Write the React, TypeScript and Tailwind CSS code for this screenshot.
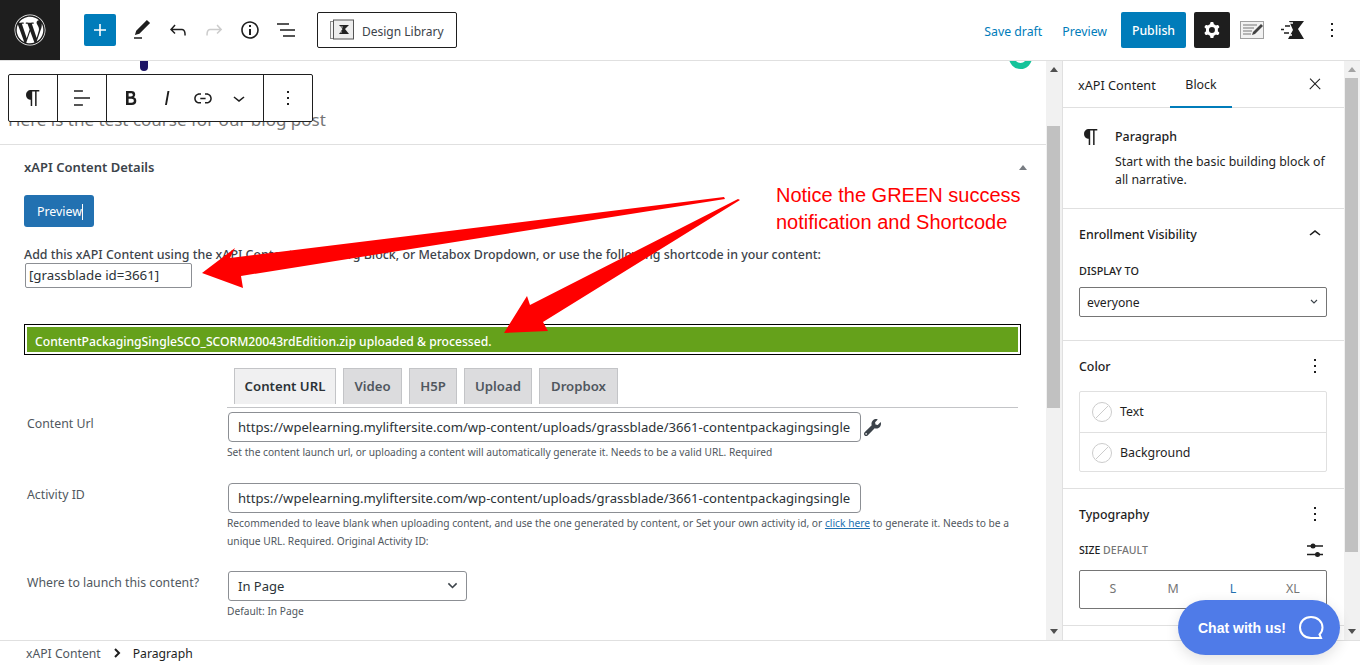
import React from "react";
import { FaWordpress, FaWrench } from "react-icons/fa";

const Wp = ({ d, size = 24, className = "" }: { d: string; size?: number; className?: string }) => (
  <svg width={size} height={size} viewBox="0 0 24 24" fill="currentColor" fillRule="evenodd" className={className}>
    <path d={d} />
  </svg>
);

const I = {
  plus: "M18 11.2h-5.2V6h-1.6v5.2H6v1.6h5.2V18h1.6v-5.2H18z",
  pen: "M20.1 5.1L16.9 2 6.2 12.7l-1.3 4.4 4.5-1.3L20.1 5.1zM4 20.8h8v-1.5H4v1.5z",
  undo: "M18.3 11.7c-.6-.6-1.4-.9-2.3-.9H6.7l2.9-3.3-1.1-1-4.5 5L8.5 16l1-1-2.7-2.7H16c.5 0 .9.2 1.3.5 1 1 1 3.4 1 4.5v.3h1.5v-.2c0-1.5 0-4.3-1.5-5.7z",
  redo: "M15.6 6.5l-1.1 1 2.9 3.3H8c-.9 0-1.7.3-2.3.9-1.4 1.5-1.4 4.2-1.4 5.6v.2h1.5v-.3c0-1.1 0-3.5 1-4.5.3-.3.7-.5 1.3-.5h9.2L14.5 15l1.1 1.1 4.6-4.6-4.6-5z",
  info: "M12 3.2c-4.8 0-8.8 3.9-8.8 8.8 0 4.8 3.9 8.8 8.8 8.8 4.8 0 8.8-3.9 8.8-8.8 0-4.8-4-8.8-8.8-8.8zm0 16c-4 0-7.2-3.3-7.2-7.2C4.8 8 8 4.8 12 4.8s7.2 3.3 7.2 7.2c0 4-3.2 7.2-7.2 7.2zM11 17h2v-6h-2v6zm0-8h2V7h-2v2z",
  list: "M3 5.2h12v1.5H3zM6 11.200h15v1.500H6zM9 17.200h12v1.500H9z",
  cog: "M10.289 4.836A1 1 0 0111.275 4h1.306a1 1 0 01.987.836l.244 1.466c.787.26 1.503.679 2.108 1.218l1.393-.522a1 1 0 011.216.437l.653 1.13a1 1 0 01-.23 1.273l-1.148.944a6.025 6.025 0 010 2.435l1.149.946a1 1 0 01.23 1.272l-.653 1.13a1 1 0 01-1.216.437l-1.394-.522c-.605.54-1.32.958-2.108 1.218l-.244 1.466a1 1 0 01-.987.836h-1.306a1 1 0 01-.986-.836l-.244-1.466a5.995 5.995 0 01-2.108-1.218l-1.394.522a1 1 0 01-1.217-.436l-.653-1.131a1 1 0 01.23-1.272l1.149-.946a6.026 6.026 0 010-2.435l-1.148-.944a1 1 0 01-.23-1.272l.653-1.131a1 1 0 011.217-.437l1.393.522a5.994 5.994 0 012.108-1.218l.244-1.466zM14.929 12a3 3 0 11-6 0 3 3 0 016 0z",
  more: "M13 19h-2v-2h2v2zm0-6h-2v-2h2v2zm0-6h-2V5h2v2z",
  para: "M18.3 4H9.9v-.1l-.9.2c-2.3.4-4 2.4-4 4.8s1.7 4.4 4 4.8l.7.1V20h1.5V5.5h2.9V20h1.5V5.5h2.7V4z",
  align: "M4 19.8h8.9v-1.5H4v1.5zm8.9-15.6H4v1.5h8.9V4.2zm-8.9 7v1.5h16v-1.5H4z",
  bold: "M14.7 11.3c1-.6 1.5-1.6 1.5-3 0-2.3-1.3-3.4-4-3.4H7v14h5.8c1.4 0 2.5-.3 3.3-1 .8-.7 1.2-1.7 1.2-2.9.1-1.9-.8-3.1-2.6-3.7zm-5.1-4h2.3c.6 0 1.1.1 1.4.4.3.3.5.7.5 1.2s-.2 1-.5 1.2c-.3.3-.8.4-1.4.4H9.6V7.3zm4.6 9c-.4.3-1 .4-1.7.4H9.6v-3.9h2.9c.7 0 1.3.2 1.7.5.4.3.6.8.6 1.5s-.2 1.2-.6 1.5z",
  italic: "M12.5 5L10 19h1.9l2.5-14z",
  link: "M15.6 7.2H14v1.5h1.6c2 0 3.7 1.7 3.7 3.7s-1.7 3.7-3.7 3.7H14v1.5h1.6c2.8 0 5.2-2.3 5.2-5.2 0-2.9-2.3-5.2-5.2-5.2zM4.7 12.4c0-2 1.7-3.7 3.7-3.7H10V7.2H8.4c-2.9 0-5.2 2.3-5.2 5.2 0 2.9 2.3 5.2 5.2 5.2H10v-1.5H8.4c-2 0-3.7-1.7-3.7-3.7zm4.6.9h5.3v-1.5H9.3v1.5z",
  down: "M17.5 11.6L12 16l-5.5-4.4.9-1.2L12 14l4.5-3.6 1 1.2z",
  up: "M6.5 12.4L12 8l5.5 4.4-.9 1.2L12 10l-4.5 3.6-1-1.2z",
  close: "M13 11.8l6.1-6.3-1-1-6.1 6.2-6.1-6.3-1 1 6.1 6.3-6.5 6.7 1 1 6.5-6.6 6.5 6.6 1-1z",
};

const Chevron = ({ width = 11 }: { width?: number }) => (
  <svg width={width} height={(width * 2) / 3} viewBox="0 0 12 8" fill="none" stroke="#3c434a" strokeWidth="1.700" className="shrink-0">
    <path d="M1.5 1.5 6 6l4.5-4.5" />
  </svg>
);

const KLogo = () => (
  <svg width="24" height="22" viewBox="0 0 24 22">
    <rect x="0.5" y="2.5" width="19" height="17" fill="#f4f4f4" stroke="#8a8a8a" />
    <rect x="3.5" y="1" width="20" height="19" fill="#eeeeee" stroke="#555" />
    <path d="M9 6h10l-4 4 4 5H9l3.500-5z" fill="#222" />
    <path d="M7 8h6M6 10.500h6M7 13h5" stroke="#eee" strokeWidth="0.8" />
  </svg>
);

const Scrollbar = ({ top, height, dimTop }: { top: number; height: number; dimTop?: boolean }) => (
  <div className="w-4 shrink-0 bg-[#f1f1f1] flex flex-col items-center relative">
    <div className={`mt-[6px] w-0 h-0 border-x-[4px] border-x-transparent border-b-[5px] ${dimTop ? "border-b-[#a3a3a3]" : "border-b-[#505050]"}`} />
    <div className="absolute left-[1px] w-[13px] bg-[#c1c1c1]" style={{ top, height }} />
    <div className="mt-auto mb-[6px] w-0 h-0 border-x-[4px] border-x-transparent border-t-[5px] border-t-[#505050]" />
  </div>
);

const Tab = ({ label, active, w }: { label: string; active?: boolean; w: string }) => (
  <div
    className={`${w} h-[36px] flex items-center justify-center text-[13.2px] font-semibold border border-b-0 border-[#c3c4c7] ${
      active ? "bg-[#f0f0f1] text-[#2c3338]" : "bg-[#dcdcde] text-[#50575e]"
    }`}
  >
    {label}
  </div>
);

const TextBox = ({ value }: { value: string }) => (
  <div className="w-[633px] h-[30px] shrink-0 rounded-[4px] border border-[#8c8f94] bg-white pl-[9px] pr-[4px] pt-[2px] flex items-center text-[13.100px] text-[#2c3338] whitespace-nowrap overflow-hidden">
    {value}
  </div>
);

const Panel = ({ children, className = "" }: { children: React.ReactNode; className?: string }) => (
  <section className={`border-b border-[#e0e0e0] pl-4 pr-[17px] ${className}`}>{children}</section>
);

const URL_VALUE = "https://wpelearning.myliftersite.com/wp-content/uploads/grassblade/3661-contentpackagingsingle";

export default function App() {
  return (
    <div
      className="w-[1360px] h-[665px] overflow-hidden bg-white flex flex-col relative text-[#1e1e1e] text-[12.4px]"
      style={{ fontFamily: '"Noto Sans", "Open Sans", sans-serif' }}
    >
      {/* Top bar */}
      <header className="h-[61px] shrink-0 border-b border-[#e0e0e0] flex items-center relative">
        <div className="w-[60px] h-[60px] bg-[#1e1e1e] flex items-center justify-center text-white">
          <FaWordpress size={32} />
        </div>
        <div className="ml-[24px] w-[32px] h-[32px] rounded-[2px] bg-[#007cba] text-white flex items-center justify-center">
          <Wp d={I.plus} />
        </div>
        <div className="ml-[14px] flex items-center gap-[12px]">
          <Wp d={I.pen} />
          <Wp d={I.undo} />
          <Wp d={I.redo} className="text-[#cccccc]" />
          <Wp d={I.info} />
          <Wp d={I.list} />
        </div>
        <div className="ml-[19px] w-[140px] h-[36px] border border-[#1e1e1e] rounded-[2px] flex items-center pl-[12px] gap-[8px]">
          <KLogo />
          <span className="text-[#3c434a] text-[12px] pt-[4px]">Design Library</span>
        </div>
        <div className="ml-auto flex items-center text-[#007cba] text-[12.3px]">
          <span className="mr-[20px] pt-[4px]">Save draft</span>
          <span className="mr-[14px] pt-[4px]">Preview</span>
          <div className="w-[65px] h-[36px] rounded-[2px] bg-[#007cba] text-white flex items-center justify-center font-medium pt-[3px]">Publish</div>
          <div className="ml-[8px] w-[36px] h-[36px] rounded-[2px] bg-[#1e1e1e] text-white flex items-center justify-center">
            <Wp d={I.cog} />
          </div>
          <svg width="24" height="20" viewBox="0 0 24 20" className="ml-[10px]">
            <rect x="0.500" y="1.500" width="23" height="17" fill="#f2f2f2" stroke="#a0a0a0" />
            <path d="M3 5h14M3 8h11M3 11h9M3 14h8" stroke="#a0a0a0" strokeWidth="1.500" />
            <path d="M12 15l1-3 8-8 2 2-8 8z" fill="#444" />
          </svg>
          <svg width="24" height="20" viewBox="0 0 24 20" className="ml-[16px] text-[#1e1e1e]">
            <path d="M9 1h15l-6 8 6 10H8l5-9z" fill="currentColor" />
            <path d="M4 3h9M0 9.500h10M3 15h9" stroke="#ffffff" strokeWidth="1.500" />
            <path d="M5 6h5M1 9.500h3M4 13h5" stroke="currentColor" strokeWidth="1.500" />
          </svg>
          <div className="ml-[16px] mr-[16px] text-[#1e1e1e]"><Wp d={I.more} /></div>
        </div>
      </header>

      {/* Middle */}
      <div className="flex-1 min-h-0 flex">
        {/* Editor column */}
        <main className="w-[1046px] shrink-0 relative overflow-hidden">
          <div className="h-[83px] pl-[8px] pt-[49px] text-[17px] leading-[20px] text-[#757575]">
            Here is the test course for our blog post
          </div>

          <div className="border-t border-[#e0e0e0] px-[24px]">
            <div className="h-[44px] flex items-center justify-between">
              <span className="font-semibold text-[#3c434a] text-[13px] pt-[2px]">xAPI Content Details</span>
              <div className="mr-[-5px] w-0 h-0 border-x-[4px] border-x-transparent border-b-[5px] border-b-[#787c82]" />
            </div>
            <div className="mt-[6px] w-[70px] h-[32px] rounded-[3px] bg-[#2271b1] text-white flex items-center justify-center pt-[2px] pl-[2px]">
              Preview<span className="w-px h-[16px] bg-white" />
            </div>
            <p className="mt-[20px] font-medium text-[12.420px] leading-[16px] text-[#3c434a] whitespace-nowrap">
              Add this xAPI Content using the xAPI Content Gutenberg Block, or Metabox Dropdown, or use the following shortcode in your content:
            </p>
            <div className="ml-[1px] w-[167px] h-[25px] border border-[#8c8f94] rounded-[2px] pl-[3px] pt-[1px] flex items-center text-[13.300px] text-[#2c3338]">
              [grassblade id=3661]
            </div>
            <div className="mt-[36px] w-[997px] h-[31px] border border-black p-[2px]">
              <div className="h-full bg-[#65a11b] text-white font-medium text-[12.150px] px-[8px] pt-[5px] flex items-center whitespace-nowrap">
                ContentPackagingSingleSCO_SCORM20043rdEdition.zip uploaded &amp; processed.
              </div>
            </div>

            <div className="mt-[13px] ml-[203px] w-[791px] h-[40px] pb-[3px] border-b border-[#c3c4c7] flex items-start gap-[7px] pl-[7px]">
              <Tab label="Content URL" active w="w-[102px]" />
              <Tab label="Video" w="w-[59px]" />
              <Tab label="H5P" w="w-[48px]" />
              <Tab label="Upload" w="w-[68px]" />
              <Tab label="Dropbox" w="w-[79px]" />
            </div>

            <div className="grid grid-cols-[204px_1fr] mt-[4px] text-[#50575e] text-[12.300px]">
              <div className="pl-[3px] pt-[3px]">Content Url</div>
              <div>
                <div className="flex items-center gap-[2px]">
                  <TextBox value={URL_VALUE} />
                  <FaWrench className="ml-[1px] text-[#3c434a]" size={17} />
                </div>
                <p className="mt-[1px] ml-[-1px] text-[10.200px] leading-[18px]">
                  Set the content launch url, or uploading a content will automatically generate it. Needs to be a valid URL. Required
                </p>
              </div>

              <div className="pl-[3px] pt-[25px]">Activity ID</div>
              <div className="pt-[22px]">
                <TextBox value={URL_VALUE} />
                <p className="mt-[1px] ml-[-1px] text-[10.230px] leading-[18px] w-[790px]">
                  Recommended to leave blank when uploading content, and use the one generated by content, or Set your own activity id, or{" "}
                  <span className="text-[#2271b1] underline">click here</span> to generate it. Needs to be a unique URL. Required. Original Activity ID:
                </p>
              </div>

              <div className="pl-[3px] pt-[24px]">Where to launch this content?</div>
              <div className="pt-[21px]">
                <div className="w-[239px] h-[30px] rounded-[3px] border border-[#8c8f94] flex items-center justify-between pl-[9px] pr-[8px] text-[13px] text-[#2c3338]">
                  <span className="pt-[2px]">In Page</span> <Chevron />
                </div>
                <p className="mt-[1px] ml-[-1px] text-[10.200px] leading-[18px]">Default: In Page</p>
              </div>
            </div>
          </div>

          {/* clipped block content peeking above the floating toolbar */}
          <div className="absolute left-[140px] top-0 w-[8px] h-[10px] rounded-b-[4px] bg-[#1c1464]" />
          <div className="absolute left-[1009px] top-[-17px] w-[23px] h-[25px] rounded-full bg-[#15c39a] flex items-center justify-center">
            <div className="w-[13px] h-[13px] rounded-full border-2 border-white" />
          </div>

          {/* block toolbar */}
          <div className="absolute left-[8px] top-[13px] h-[48px] border border-[#1e1e1e] rounded-[2px] bg-white flex items-center">
            <div className="w-[49px] h-full border-r border-[#1e1e1e] flex items-center justify-center"><Wp d={I.para} /></div>
            <div className="w-[49px] h-full border-r border-[#1e1e1e] flex items-center justify-center"><Wp d={I.align} /></div>
            <div className="w-[157px] h-full border-r border-[#1e1e1e] flex items-center justify-center gap-[12px]">
              <Wp d={I.bold} />
              <Wp d={I.italic} />
              <Wp d={I.link} />
              <Wp d={I.down} />
            </div>
            <div className="w-[48px] h-full flex items-center justify-center"><Wp d={I.more} /></div>
          </div>

          {/* annotation */}
          <div className="absolute left-[776px] top-[121px] text-[20px] leading-[27px] text-[#ff0000] whitespace-nowrap" style={{ fontFamily: '"Liberation Sans", Arial, sans-serif' }}>
            Notice the GREEN success
            <br />
            notification and Shortcode
          </div>
          <svg className="absolute left-0 top-[-61px] pointer-events-none" width="1046" height="640" viewBox="0 0 1046 640">
            <path d="M724 197l1 2-484 77 2 12-41-15 33-25-5 10z" fill="#ff0000" />
            <path d="M738 199l2 1-197 122 5 9-44 2 23-37 3 9z" fill="#ff0000" />
          </svg>
        </main>

        <Scrollbar top={65} height={282} />

        {/* Sidebar */}
        <aside className="w-[282px] shrink-0 border-l border-[#e0e0e0] overflow-hidden">
          <div className="h-[47px] border-b border-[#e0e0e0] flex items-center relative">
            <span className="ml-[15px] w-[78px] text-[12.700px] pt-[3px] whitespace-nowrap">xAPI Content</span>
            <div className="ml-[14px] w-[62px] h-[47px] flex items-center justify-center border-b-2 border-[#007cba] mb-[-1px] pt-[4px]">Block</div>
            <div className="ml-auto mr-[20px]"><Wp d={I.close} size={18} /></div>
          </div>

          <Panel className="h-[101px] flex gap-[9px] pt-[16px]">
            <Wp d={I.para} className="shrink-0 mt-[1px]" />
            <div className="pl-[3px] pt-[1px]">
              <div className="font-medium leading-[24px]">Paragraph</div>
              <p className="mt-[4px] leading-[18px] text-[12.300px] text-[#1e1e1e]">Start with the basic building block of all narrative.</p>
            </div>
          </Panel>

          <Panel className="h-[132px] pt-[13px]">
            <div className="flex justify-between items-center h-[24px]">
              <span className="font-medium pt-[2px]">Enrollment Visibility</span>
              <Wp d={I.up} />
            </div>
            <div className="mt-[16px] text-[10.800px] font-medium leading-[18px]">DISPLAY TO</div>
            <div className="mt-[7px] h-[30px] rounded-[2px] border border-[#757575] flex items-center justify-between pl-[7px] pr-[8px] text-[12.200px]">
              <span className="pt-[2px]">everyone</span>
              <Chevron width={8} />
            </div>
          </Panel>

          <Panel className="h-[148px] pt-[13px]">
            <div className="flex justify-between items-center h-[24px]">
              <span className="font-medium pt-[2px]">Color</span>
              <Wp d={I.more} />
            </div>
            <div className="mt-[13px] border border-[#e0e0e0] rounded-[2px]">
              {["Text", "Background"].map((t, i) => (
                <div key={t} className={`h-[40px] flex items-center pl-[12px] gap-[8px] ${i ? "border-t border-[#e0e0e0] mb-[-1px] pb-[-1px]" : ""}`}>
                  <svg width="20" height="20" viewBox="0 0 20 20" fill="none" stroke="#cccccc">
                    <circle cx="10" cy="10" r="9.500" />
                    <path d="M4 16 16 4" />
                  </svg>
                  <span className={i ? "pt-[2px]" : ""}>{t}</span>
                </div>
              ))}
            </div>
          </Panel>

          <Panel className="h-[137px] pt-[13px]">
            <div className="flex justify-between items-center h-[24px]">
              <span className="font-medium pt-[2px]">Typography</span>
              <Wp d={I.more} />
            </div>
            <div className="mt-[12px] flex justify-between items-center h-[24px]">
              <span className="text-[10.500px] font-medium pt-[2px]">
                SIZE <span className="text-[#757575]">DEFAULT</span>
              </span>
              <svg width="24" height="24" viewBox="0 0 24 24" className="shrink-0">
                <path d="M4 8h16M4 16.500h16" stroke="#1e1e1e" strokeWidth="1.500" />
                <circle cx="10" cy="8" r="2.500" fill="#1e1e1e" />
                <circle cx="14.500" cy="16.500" r="2.500" fill="#1e1e1e" />
              </svg>
            </div>
            <div className="mt-[8px] h-[39px] rounded-[2px] border border-[#757575] grid grid-cols-4 px-[3px] items-center text-center text-[#757575]">
              <span>S</span>
              <span>M</span>
              <span className="text-[#2271b1]">L</span>
              <span>XL</span>
            </div>
          </Panel>
        </aside>

        <Scrollbar top={17} height={474} dimTop />
      </div>

      {/* Breadcrumb */}
      <footer className="h-[25px] shrink-0 border-t border-[#e0e0e0] bg-white flex items-center pl-[26px] text-[12.200px] text-[#50575e] relative z-10">
        <span className="pt-[2px]">xAPI Content</span>
        <svg width="16" height="16" viewBox="0 0 24 24" className="mx-[8px]" fill="none" stroke="#1e1e1e" strokeWidth="3">
          <path d="M9 6l6 6-6 6" />
        </svg>
        <span className="text-[#1e1e1e] pt-[2px]">Paragraph</span>
      </footer>

      {/* Chat */}
      <div className="absolute z-20 left-[1178px] top-[600px] w-[162px] h-[55px] rounded-[28px] bg-[#4f7be8] text-white flex items-center pl-[20px] shadow-[0_4px_14px_rgba(0,0,0,0.12)]">
        <span className="font-bold text-[14px] pt-[2px]" style={{ fontFamily: '"Liberation Sans", Arial, sans-serif' }}>
          Chat with us!
        </span>
        <svg width="26" height="26" viewBox="0 0 26 26" fill="none" stroke="#ffffff" strokeWidth="2" className="ml-[12px]">
          <path d="M13 2C6.500 2 2 6.500 2 12.500S6.500 23 13 23h10l-1.500-3.500C23.500 17.500 24.500 15 24.500 12.500 24.500 6.500 19.500 2 13 2z" />
        </svg>
      </div>
    </div>
  );
}
